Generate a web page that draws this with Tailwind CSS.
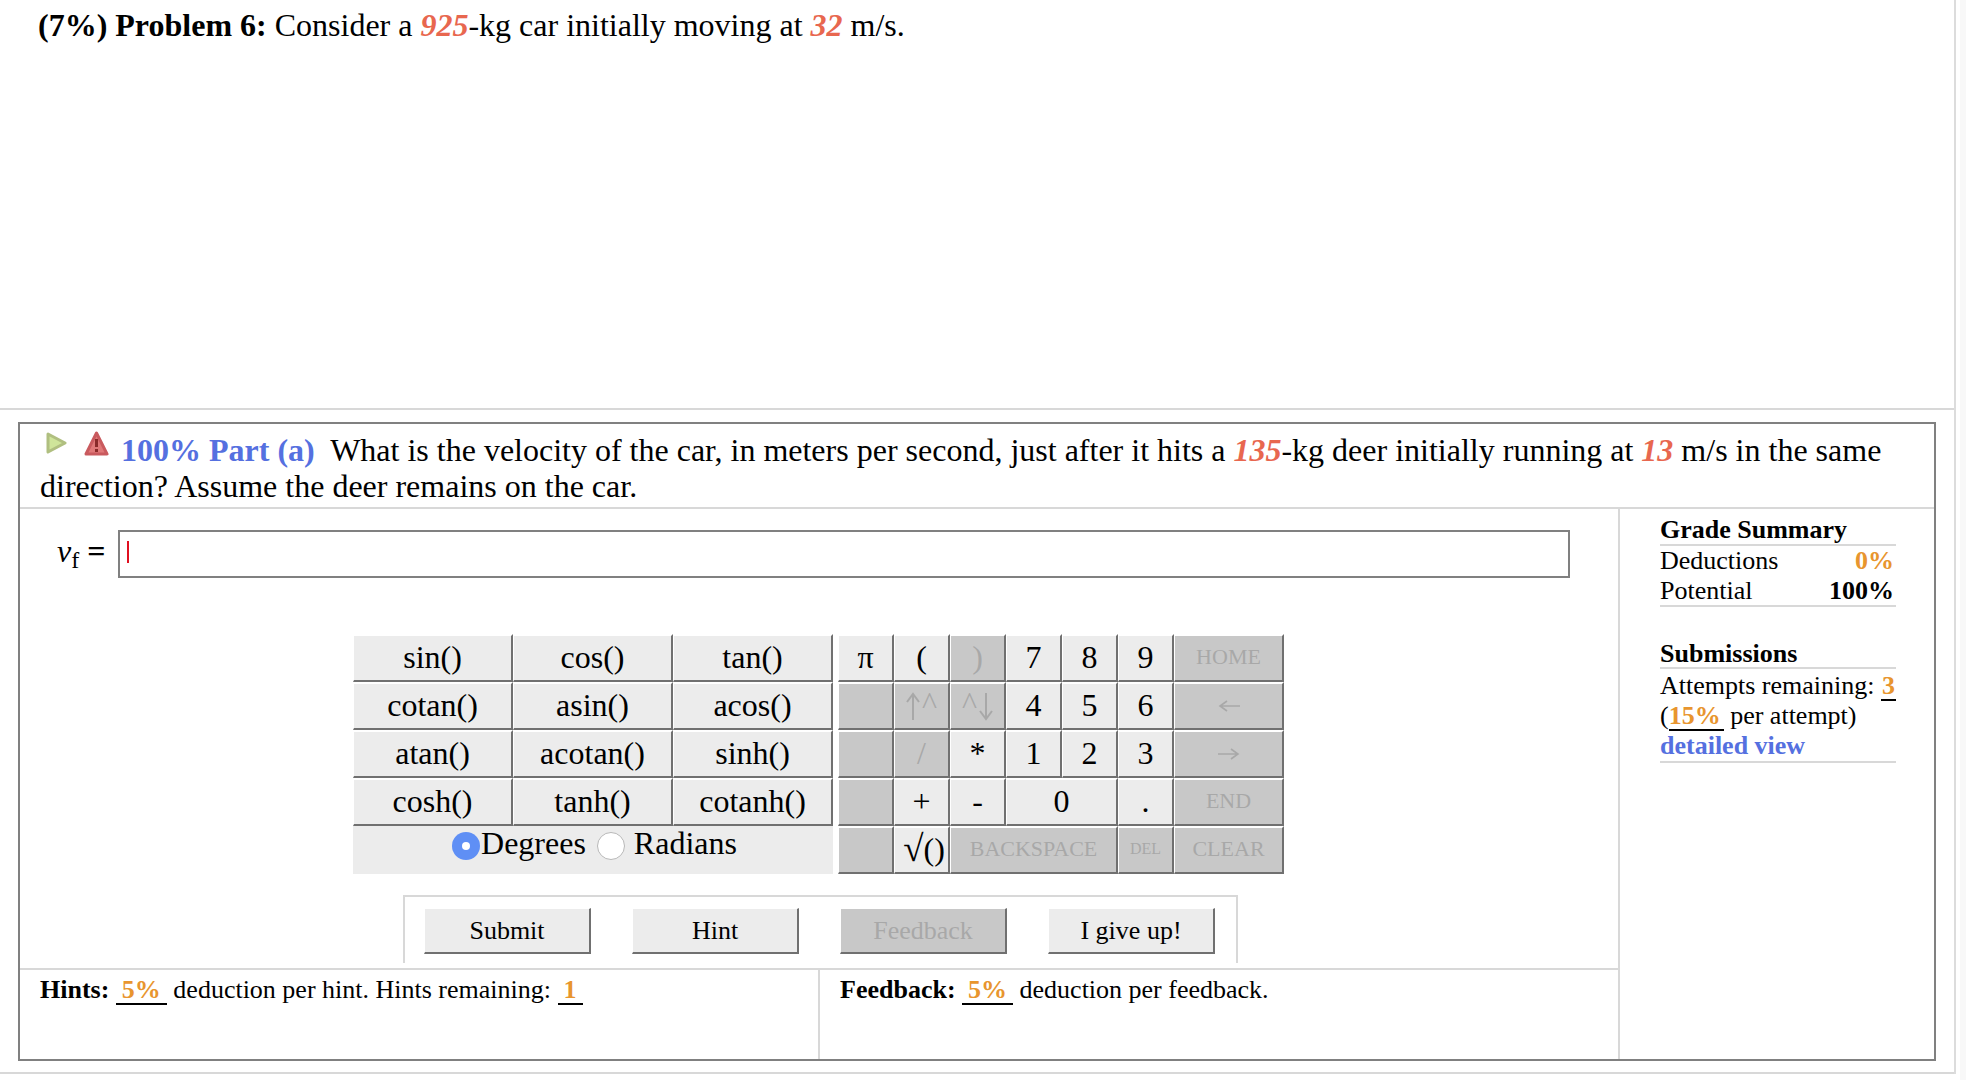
<!DOCTYPE html>
<html lang="en">
<head>
    <meta charset="UTF-8">
    <title>Problem 6</title>
    <script src="https://cdn.jsdelivr.net/npm/@tailwindcss/browser@4"></script>
</head>
<body class="bg-white text-black font-['Liberation_Serif',serif] text-[32px] leading-[36px] overflow-hidden flex h-[1080px]">
<div class="w-[1956px] shrink-0 h-[1074px] border-r-2 border-[#dcdcdc]">
    <!-- problem statement -->
    <div class="h-[410px] border-b-2 border-[#d8d8d8] pl-[38px] pt-[7px]">
        <b>(7%) Problem 6:</b> Consider a <i class="font-bold text-[#e8674f]">925</i>-kg car initially moving at <i class="font-bold text-[#e8674f]">32</i> m/s.
    </div>

    <!-- part a -->
    <div class="ml-[18px] mt-[12px] w-[1918px] h-[639px] border-2 border-[#808080] flex flex-col">
        <div class="h-[85px] shrink-0 border-b-2 border-[#d8d8d8] pl-[20px] pr-[40px] pt-[8px]">
            <svg class="inline-block align-top ml-[6px] mr-[17px] blur-[0.5px]" width="21" height="22" viewBox="0 0 21 22"><path d="M2 2 L19 11 L2 20 Z" fill="#cfe59a" stroke="#b0bf80" stroke-width="3" stroke-linejoin="round"/></svg><svg class="inline-block align-top -mt-[1px] mr-[12px] blur-[0.4px]" width="25" height="26" viewBox="0 0 25 26"><path d="M12.5 2 L23 23 L2 23 Z" fill="#e07878" stroke="#c95a5e" stroke-width="3" stroke-linejoin="round"/><path d="M12.5 8 V16" stroke="#8a2a2a" stroke-width="3"/><rect x="11" y="18" width="3" height="3" fill="#8a2a2a"/></svg><b class="text-[#5570e0]">100% Part (a)</b>&nbsp; What is the velocity of the car, in meters per second, just after it hits a <i class="font-bold text-[#e8674f]">135</i>-kg deer initially running at <i class="font-bold text-[#e8674f]">13</i> m/s in the same direction? Assume the deer remains on the car.
        </div>
        <div class="flex-1 flex min-h-0">
            <div class="w-[1598px] shrink-0 flex flex-col">
                <!-- answer -->
                <div class="flex items-start pl-[37px] pt-[21px] h-[125px] shrink-0">
                    <span class="w-[61px] shrink-0 pt-[3px]"><i>v</i><span class="text-[24px] relative top-[6px]">f</span> <span class="font-bold">=</span></span>
                    <div class="w-[1452px] h-[48px] border-2 border-[#808080] pl-[7px] pt-[9px]"><div class="w-[2px] h-[22px] bg-[#e01020]"></div></div>
                </div>

                <!-- keypad -->
                <div class="flex pl-[333px] gap-[5px]">
                    <div class="w-[480px] grid grid-cols-3 auto-rows-[48px]">
                        <div class="border-t-2 border-l border-r-2 border-b-2 border-t-white border-l-white border-r-[#707070] border-b-[#707070] bg-[#ececec] pb-[2px] flex items-center justify-center">sin()</div>
                        <div class="border-t-2 border-l border-r-2 border-b-2 border-t-white border-l-white border-r-[#707070] border-b-[#707070] bg-[#ececec] pb-[2px] flex items-center justify-center">cos()</div>
                        <div class="border-t-2 border-l border-r-2 border-b-2 border-t-white border-l-white border-r-[#707070] border-b-[#707070] bg-[#ececec] pb-[2px] flex items-center justify-center">tan()</div>
                        <div class="border-t-2 border-l border-r-2 border-b-2 border-t-white border-l-white border-r-[#707070] border-b-[#707070] bg-[#ececec] pb-[2px] flex items-center justify-center">cotan()</div>
                        <div class="border-t-2 border-l border-r-2 border-b-2 border-t-white border-l-white border-r-[#707070] border-b-[#707070] bg-[#ececec] pb-[2px] flex items-center justify-center">asin()</div>
                        <div class="border-t-2 border-l border-r-2 border-b-2 border-t-white border-l-white border-r-[#707070] border-b-[#707070] bg-[#ececec] pb-[2px] flex items-center justify-center">acos()</div>
                        <div class="border-t-2 border-l border-r-2 border-b-2 border-t-white border-l-white border-r-[#707070] border-b-[#707070] bg-[#ececec] pb-[2px] flex items-center justify-center">atan()</div>
                        <div class="border-t-2 border-l border-r-2 border-b-2 border-t-white border-l-white border-r-[#707070] border-b-[#707070] bg-[#ececec] pb-[2px] flex items-center justify-center">acotan()</div>
                        <div class="border-t-2 border-l border-r-2 border-b-2 border-t-white border-l-white border-r-[#707070] border-b-[#707070] bg-[#ececec] pb-[2px] flex items-center justify-center">sinh()</div>
                        <div class="border-t-2 border-l border-r-2 border-b-2 border-t-white border-l-white border-r-[#707070] border-b-[#707070] bg-[#ececec] pb-[2px] flex items-center justify-center">cosh()</div>
                        <div class="border-t-2 border-l border-r-2 border-b-2 border-t-white border-l-white border-r-[#707070] border-b-[#707070] bg-[#ececec] pb-[2px] flex items-center justify-center">tanh()</div>
                        <div class="border-t-2 border-l border-r-2 border-b-2 border-t-white border-l-white border-r-[#707070] border-b-[#707070] bg-[#ececec] pb-[2px] flex items-center justify-center">cotanh()</div>
                        <div class="col-span-3 bg-[#ececec] flex justify-center items-start pl-[3px]">
                            <span class="w-[28px] h-[28px] rounded-full bg-[#5f8ff5] flex items-center justify-center mt-[6px]"><span class="w-[8px] h-[8px] rounded-full bg-white"></span></span>
                            <span class="ml-[1px] -mt-[1px]">Degrees</span>
                            <span class="w-[28px] h-[28px] rounded-full bg-white border border-[#b8b8b8] mt-[6px] ml-[11px] mr-[9px]"></span>
                            <span class="-mt-[1px]">Radians</span>
                        </div>
                    </div>
                    <div class="w-[446px] grid grid-cols-[56px_56px_56px_56px_56px_56px_110px] auto-rows-[48px]">
                        <div class="border-t-2 border-l border-r-2 border-b-2 border-t-white border-l-white border-r-[#707070] border-b-[#707070] bg-[#ececec] pb-[2px] flex items-center justify-center">π</div>
                        <div class="border-t-2 border-l border-r-2 border-b-2 border-t-white border-l-white border-r-[#707070] border-b-[#707070] bg-[#ececec] pb-[2px] flex items-center justify-center">(</div>
                        <div class="border-t-2 border-l border-r-2 border-b-2 border-t-white border-l-white border-r-[#707070] border-b-[#707070] bg-[#c8c8c8] text-[#a8a8a8] pb-[2px] flex items-center justify-center">)</div>
                        <div class="border-t-2 border-l border-r-2 border-b-2 border-t-white border-l-white border-r-[#707070] border-b-[#707070] bg-[#ececec] pb-[2px] flex items-center justify-center">7</div>
                        <div class="border-t-2 border-l border-r-2 border-b-2 border-t-white border-l-white border-r-[#707070] border-b-[#707070] bg-[#ececec] pb-[2px] flex items-center justify-center">8</div>
                        <div class="border-t-2 border-l border-r-2 border-b-2 border-t-white border-l-white border-r-[#707070] border-b-[#707070] bg-[#ececec] pb-[2px] flex items-center justify-center">9</div>
                        <div class="border-t-2 border-l border-r-2 border-b-2 border-t-white border-l-white border-r-[#707070] border-b-[#707070] bg-[#c8c8c8] text-[#a8a8a8] text-[22px] pb-[2px] flex items-center justify-center">HOME</div>

                        <div class="border-t-2 border-l border-r-2 border-b-2 border-t-white border-l-white border-r-[#707070] border-b-[#707070] bg-[#c8c8c8]"></div>
                        <div class="border-t-2 border-l border-r-2 border-b-2 border-t-white border-l-white border-r-[#707070] border-b-[#707070] bg-[#c8c8c8] text-[#a8a8a8] flex items-center justify-center gap-[2px]">
                            <svg width="14" height="29" viewBox="0 0 14 29" fill="none" stroke="#a8a8a8" stroke-width="2"><path d="M7 28 V2 M1 10 L7 2 L13 10"/></svg><span class="-mt-[6px]">^</span>
                        </div>
                        <div class="border-t-2 border-l border-r-2 border-b-2 border-t-white border-l-white border-r-[#707070] border-b-[#707070] bg-[#c8c8c8] text-[#a8a8a8] flex items-center justify-center gap-[2px]">
                            <span class="-mt-[6px]">^</span><svg width="14" height="29" viewBox="0 0 14 29" fill="none" stroke="#a8a8a8" stroke-width="2"><path d="M7 1 V27 M1 19 L7 27 L13 19"/></svg>
                        </div>
                        <div class="border-t-2 border-l border-r-2 border-b-2 border-t-white border-l-white border-r-[#707070] border-b-[#707070] bg-[#ececec] pb-[2px] flex items-center justify-center">4</div>
                        <div class="border-t-2 border-l border-r-2 border-b-2 border-t-white border-l-white border-r-[#707070] border-b-[#707070] bg-[#ececec] pb-[2px] flex items-center justify-center">5</div>
                        <div class="border-t-2 border-l border-r-2 border-b-2 border-t-white border-l-white border-r-[#707070] border-b-[#707070] bg-[#ececec] pb-[2px] flex items-center justify-center">6</div>
                        <div class="border-t-2 border-l border-r-2 border-b-2 border-t-white border-l-white border-r-[#707070] border-b-[#707070] bg-[#c8c8c8] flex items-center justify-center">
                            <svg width="22" height="12" viewBox="0 0 22 12" fill="none" stroke="#a8a8a8" stroke-width="1.6"><path d="M22 6 H2 M9 1 L2 6 L9 11"/></svg>
                        </div>

                        <div class="border-t-2 border-l border-r-2 border-b-2 border-t-white border-l-white border-r-[#707070] border-b-[#707070] bg-[#c8c8c8]"></div>
                        <div class="border-t-2 border-l border-r-2 border-b-2 border-t-white border-l-white border-r-[#707070] border-b-[#707070] bg-[#c8c8c8] text-[#a8a8a8] pb-[2px] flex items-center justify-center">/</div>
                        <div class="border-t-2 border-l border-r-2 border-b-2 border-t-white border-l-white border-r-[#707070] border-b-[#707070] bg-[#ececec] pb-[2px] flex items-center justify-center">*</div>
                        <div class="border-t-2 border-l border-r-2 border-b-2 border-t-white border-l-white border-r-[#707070] border-b-[#707070] bg-[#ececec] pb-[2px] flex items-center justify-center">1</div>
                        <div class="border-t-2 border-l border-r-2 border-b-2 border-t-white border-l-white border-r-[#707070] border-b-[#707070] bg-[#ececec] pb-[2px] flex items-center justify-center">2</div>
                        <div class="border-t-2 border-l border-r-2 border-b-2 border-t-white border-l-white border-r-[#707070] border-b-[#707070] bg-[#ececec] pb-[2px] flex items-center justify-center">3</div>
                        <div class="border-t-2 border-l border-r-2 border-b-2 border-t-white border-l-white border-r-[#707070] border-b-[#707070] bg-[#c8c8c8] flex items-center justify-center">
                            <svg width="22" height="12" viewBox="0 0 22 12" fill="none" stroke="#a8a8a8" stroke-width="1.6"><path d="M0 6 H20 M13 1 L20 6 L13 11"/></svg>
                        </div>

                        <div class="border-t-2 border-l border-r-2 border-b-2 border-t-white border-l-white border-r-[#707070] border-b-[#707070] bg-[#c8c8c8]"></div>
                        <div class="border-t-2 border-l border-r-2 border-b-2 border-t-white border-l-white border-r-[#707070] border-b-[#707070] bg-[#ececec] pb-[2px] flex items-center justify-center">+</div>
                        <div class="border-t-2 border-l border-r-2 border-b-2 border-t-white border-l-white border-r-[#707070] border-b-[#707070] bg-[#ececec] pb-[2px] flex items-center justify-center">-</div>
                        <div class="col-span-2 border-t-2 border-l border-r-2 border-b-2 border-t-white border-l-white border-r-[#707070] border-b-[#707070] bg-[#ececec] pb-[2px] flex items-center justify-center">0</div>
                        <div class="border-t-2 border-l border-r-2 border-b-2 border-t-white border-l-white border-r-[#707070] border-b-[#707070] bg-[#ececec] pb-[2px] flex items-center justify-center">.</div>
                        <div class="border-t-2 border-l border-r-2 border-b-2 border-t-white border-l-white border-r-[#707070] border-b-[#707070] bg-[#c8c8c8] text-[#a8a8a8] text-[22px] pb-[2px] flex items-center justify-center">END</div>

                        <div class="border-t-2 border-l border-r-2 border-b-2 border-t-white border-l-white border-r-[#707070] border-b-[#707070] bg-[#c8c8c8]"></div>
                        <div class="border-t-2 border-l border-r-2 border-b-2 border-t-white border-l-white border-r-[#707070] border-b-[#707070] bg-[#ececec] pb-[2px] pl-[5px] flex items-center justify-center"><span class="text-[37px]">√</span><span>()</span></div>
                        <div class="col-span-3 border-t-2 border-l border-r-2 border-b-2 border-t-white border-l-white border-r-[#707070] border-b-[#707070] bg-[#c8c8c8] text-[#a8a8a8] text-[22px] pb-[3px] flex items-center justify-center">BACKSPACE</div>
                        <div class="border-t-2 border-l border-r-2 border-b-2 border-t-white border-l-white border-r-[#707070] border-b-[#707070] bg-[#c8c8c8] text-[#a8a8a8] text-[16px] pb-[3px] flex items-center justify-center">DEL</div>
                        <div class="border-t-2 border-l border-r-2 border-b-2 border-t-white border-l-white border-r-[#707070] border-b-[#707070] bg-[#c8c8c8] text-[#a8a8a8] text-[22px] pb-[2px] flex items-center justify-center">CLEAR</div>
                    </div>
                </div>

                <!-- buttons -->
                <div class="ml-[383px] mt-[21px] w-[835px] h-[68px] shrink-0 border-t-2 border-x-2 border-[#d8d8d8] flex gap-[41px] pl-[19px] pt-[11px] text-[26px]">
                    <div class="w-[167px] h-[46px] border-t border-l border-r-2 border-b-2 border-t-white border-l-white border-r-[#707070] border-b-[#707070] bg-[#ececec] flex items-center justify-center">Submit</div>
                    <div class="w-[167px] h-[46px] border-t border-l border-r-2 border-b-2 border-t-white border-l-white border-r-[#707070] border-b-[#707070] bg-[#ececec] flex items-center justify-center">Hint</div>
                    <div class="w-[167px] h-[46px] border-t border-l border-r-2 border-b-2 border-t-white border-l-white border-r-[#707070] border-b-[#707070] bg-[#c8c8c8] text-[#a8a8a8] flex items-center justify-center">Feedback</div>
                    <div class="w-[167px] h-[46px] border-t border-l border-r-2 border-b-2 border-t-white border-l-white border-r-[#707070] border-b-[#707070] bg-[#ececec] flex items-center justify-center">I give up!</div>
                </div>

                <!-- hints and feedback -->
                <div class="mt-[5px] flex-1 border-t-2 border-[#d8d8d8] flex text-[26px] leading-[30px]">
                    <div class="w-[800px] border-r-2 border-[#d8d8d8] pl-[20px] pt-[5px]">
                        <b>Hints:</b> <span class="inline-block border-b-2 border-black px-[6px] h-[30px] font-bold text-[#e8952e]">5%</span> deduction per hint. Hints remaining: <span class="inline-block border-b-2 border-black px-[6px] h-[30px] font-bold text-[#e8952e]">1</span>
                    </div>
                    <div class="pl-[20px] pt-[5px]">
                        <b>Feedback:</b> <span class="inline-block border-b-2 border-black px-[6px] h-[30px] font-bold text-[#e8952e]">5%</span> deduction per feedback.
                    </div>
                </div>
            </div>

            <!-- sidebar -->
            <div class="flex-1 border-l-2 border-[#d8d8d8] pl-[40px] pr-[41px] pt-[6px] text-[26px] leading-[30px]">
                <div class="font-bold border-b-2 border-[#d8d8d8] h-[31px]">Grade Summary</div>
                <div class="flex justify-between pr-[2px]"><span>Deductions</span><b class="text-[#e8952e]">0%</b></div>
                <div class="flex justify-between pr-[2px] border-b-2 border-[#d8d8d8] h-[31px]"><span>Potential</span><b>100%</b></div>
                <div class="font-bold border-b-2 border-[#d8d8d8] h-[30px] mt-[32px]">Submissions</div>
                <div class="border-b-2 border-[#d8d8d8] pt-[2px] h-[94px] whitespace-nowrap">
                    Attempts remaining: <b class="text-[#e8952e] border-b-2 border-black inline-block h-[30px] px-px">3</b><br>
                    (<b class="text-[#e8952e] border-b-2 border-black inline-block h-[30px] pr-[3px]">15%</b> per attempt)<br>
                    <b class="text-[#5570e0]">detailed view</b>
                </div>
            </div>
        </div>
    </div>
    <div class="mt-[11px] border-t-2 border-[#d8d8d8]"></div>
</div>
<div class="ml-[4px] flex-1 bg-[#f8f8f8]"></div>
</body>
</html>
